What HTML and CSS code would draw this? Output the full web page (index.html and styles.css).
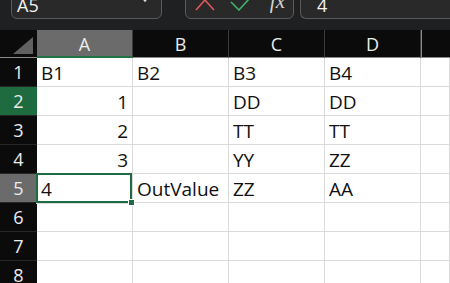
FILE: index.html
```html
<!DOCTYPE html>
<html lang="en">
<head>
  <meta charset="UTF-8" />
  <title>Sheet</title>
  <link rel="stylesheet" href="styles.css">
</head>
<body>
  <!-- formula bar -->
  <div class="topbar">
    <div class="namebox">
      <span class="ref">A5</span>
      <svg class="chev" width="12" height="10" viewBox="0 0 12 10"><polyline points="1,1 6,7 11,1" fill="none" stroke="#d8d8d8" stroke-width="1.5"/></svg>
    </div>
    <svg class="dots" width="6" height="12" viewBox="0 0 6 12"><rect x="2" y="0" width="2" height="3" fill="#e6e6e6"/><rect x="2" y="6" width="2" height="3" fill="#e6e6e6"/></svg>
    <div class="iconbox">
      <svg width="22" height="22" viewBox="0 0 22 22" class="cancel"><path d="M2 1 L20 21 M20 1 L2 21" stroke="#e0575c" stroke-width="1.6" fill="none"/></svg>
      <svg width="22" height="22" viewBox="0 0 22 22" class="enter"><polyline points="2,13 10,21 21,9" stroke="#3fb36b" stroke-width="1.6" fill="none"/></svg>
      <span class="fx">fx</span>
    </div>
    <div class="formula"><span>4</span></div>
  </div>

  <div class="sheet">
    <div class="corner"><span class="tri"></span></div>
    <div class="colhead sel">A</div>
    <div class="colhead">B</div>
    <div class="colhead">C</div>
    <div class="colhead">D</div>
    <div class="colhead last"></div>

    <div class="rowhead">1</div>
    <div class="cell">B1</div><div class="cell">B2</div><div class="cell">B3</div><div class="cell">B4</div><div class="cell"></div>

    <div class="rowhead green">2</div>
    <div class="cell num">1</div><div class="cell"></div><div class="cell">DD</div><div class="cell">DD</div><div class="cell"></div>

    <div class="rowhead">3</div>
    <div class="cell num">2</div><div class="cell"></div><div class="cell">TT</div><div class="cell">TT</div><div class="cell"></div>

    <div class="rowhead">4</div>
    <div class="cell num">3</div><div class="cell"></div><div class="cell">YY</div><div class="cell">ZZ</div><div class="cell"></div>

    <div class="rowhead sel">5</div>
    <div class="cell active">4<span class="handle"></span></div><div class="cell">OutValue</div><div class="cell">ZZ</div><div class="cell">AA</div><div class="cell"></div>

    <div class="rowhead">6</div>
    <div class="cell"></div><div class="cell"></div><div class="cell"></div><div class="cell"></div><div class="cell"></div>

    <div class="rowhead">7</div>
    <div class="cell"></div><div class="cell"></div><div class="cell"></div><div class="cell"></div><div class="cell"></div>

    <div class="rowhead">8</div>
    <div class="cell"></div><div class="cell"></div><div class="cell"></div><div class="cell"></div><div class="cell"></div>
  </div>
</body>
</html>
```

FILE: styles.css
```css
body {
  margin: 0;
  width: 450px;
  height: 283px;
  overflow: hidden;
  background: #fff;
  font-family: "Open Sans", Arial, sans-serif;
}
.topbar {
  height: 30px;
  background: #1f2022;
  display: flex;
  align-items: flex-end;
  padding-left: 11px;
  padding-bottom: 11px;
  box-sizing: border-box;
  overflow: hidden;
}
.namebox, .iconbox, .formula {
  height: 34px;
  box-sizing: border-box;
  border: 1px solid #5a5a5a;
  border-radius: 6px;
  background: #292929;
  flex-shrink: 0;
  display: flex;
  align-items: flex-end;
}
.namebox {
  width: 151px;
  padding: 0 10px 4px 5px;
  justify-content: space-between;
}
.ref, .formula span {
  color: #f2f2f2;
  font-size: 18px;
  line-height: 18px;
}
.chev {
  margin-bottom: 10px;
}
.dots {
  margin: 0 0 10px 13px;
}
.iconbox {
  width: 109px;
  margin-left: 10px;
  padding: 0 8px 7px 8px;
  gap: 13px;
}
.iconbox svg {
  display: block;
}
.fx {
  font-family: "Liberation Serif", serif;
  font-style: italic;
  font-size: 21px;
  line-height: 18px;
  color: #d4d4d4;
  margin-left: 6px;
  margin-bottom: 1px;
}
.formula {
  width: 160px;
  margin-left: 6px;
  padding: 0 0 4px 16px;
  border-right: none;
}
.sheet {
  display: grid;
  grid-template-columns: 37px 96px 96px 96px 96px 1fr;
  grid-template-rows: 28px;
  grid-auto-rows: 29px;
}
.corner {
  background: #0b0b0b;
  border-bottom: 1px solid #8c8c8c;
  position: relative;
}
.tri {
  position: absolute;
  left: 13px;
  top: 7px;
  width: 0;
  height: 0;
  border-left: 20px solid transparent;
  border-bottom: 17px solid #616161;
}
.colhead {
  background: #0b0b0b;
  color: #ececec;
  font-size: 18px;
  text-align: center;
  line-height: 28px;
  border-right: 1px solid #3c3c3c;
  border-bottom: 1px solid #8c8c8c;
  box-sizing: border-box;
}
.colhead.sel {
  background: #6b6b6b;
  border-bottom: 2px solid #217346;
}
.colhead.last {
  border-left: 1px solid #8c8c8c;
  border-right: none;
}
.rowhead {
  background: #0b0b0b;
  color: #ececec;
  font-size: 18px;
  text-align: center;
  line-height: 29px;
  border-bottom: 1px solid #262626;
  box-sizing: border-box;
}
.rowhead.green {
  background: #1d6b3f;
}
.rowhead.sel {
  background: #6b6b6b;
}
.cell {
  color: #111;
  font-size: 19px;
  line-height: 26px;
  padding: 2px 4px 0;
  white-space: nowrap;
  border-right: 1px solid #dadada;
  border-bottom: 1px solid #dadada;
  box-sizing: border-box;
}
.cell.num {
  text-align: right;
}
.cell.active {
  position: relative;
  box-shadow: inset 0 0 0 2px #1e6b41;
  margin-left: -1px;
  margin-top: -1px;
  margin-bottom: -1px;
  padding-left: 5px;
  padding-top: 3px;
}
.handle {
  position: absolute;
  right: -3px;
  bottom: -3px;
  width: 5px;
  height: 5px;
  background: #1e6b41;
  border: 1px solid #fff;
}
```
